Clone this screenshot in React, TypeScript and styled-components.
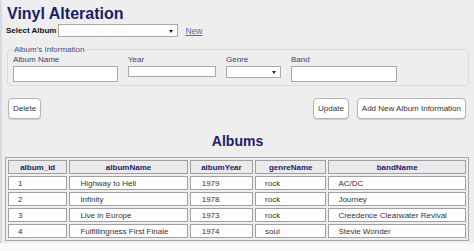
import styled, { createGlobalStyle } from "styled-components";

const GlobalStyle = createGlobalStyle`
    html, body {
        margin: 0;
        padding: 0;
        background: #f7f7fa;
        font-family: "Liberation Sans", Arial, sans-serif;
    }
`;

const Page = styled.div`
    display: flex;
    width: 474px;
    height: 251px;
    overflow: hidden;
    background: #fafafa;
`;

const Strip = styled.div`
    width: 3px;
    height: 243px;
    background: #d9d9e6;
`;

const Main = styled.div`
    flex: 1;
    height: 243px;
    background: #eeeeee;
    padding: 4px 5px 0 4px;
    box-sizing: border-box;
`;

const Title = styled.h1`
    margin: 0 0 0 1px;
    font-size: 16px;
    line-height: 19px;
    font-weight: bold;
    color: #1b1b6e;
`;

const SelectRow = styled.div`
    display: flex;
    align-items: center;
    gap: 2px;
    margin-top: 1px;
    height: 13px;
`;

const BoldLabel = styled.span`
    font-size: 8px;
    font-weight: bold;
    color: #111;
`;

const FakeSelect = styled.div<{ w: number; h: number }>`
    position: relative;
    width: ${p => p.w}px;
    height: ${p => p.h}px;
    background: #fff;
    border: 1px solid #a9a9a9;
    box-sizing: border-box;
    &::after {
        content: "";
        position: absolute;
        right: 4px;
        top: 50%;
        margin-top: -1px;
        border-left: 2px solid transparent;
        border-right: 2px solid transparent;
        border-top: 3px solid #222;
    }
`;

const NewLink = styled.a`
    margin-left: 5px;
    font-size: 8.5px;
    color: #6b5fb0;
    text-decoration: underline;
`;

const Fieldset = styled.fieldset`
    margin: 8px 0 0 1px;
    padding: 0 5px 5px 5px;
    border: 1px solid #dcdcdc;
    border-radius: 4px;
    height: 41px;
    box-sizing: border-box;
`;

const Legend = styled.legend`
    font-size: 8px;
    color: #4b4b85;
    padding: 0 1px;
    margin-left: 0;
`;

const Fields = styled.div`
    display: flex;
    gap: 10px;
    margin-top: 1px;
`;

const Field = styled.div`
    display: flex;
    flex-direction: column;
    gap: 1px;
`;

const FieldLabel = styled.span`
    font-size: 8px;
    line-height: 10px;
    color: #3c3c70;
`;

const TextBox = styled.div<{ w: number; h: number }>`
    width: ${p => p.w}px;
    height: ${p => p.h}px;
    background: #fff;
    border: 1px solid #a9a9a9;
    box-sizing: border-box;
`;

const ButtonRow = styled.div`
    display: flex;
    align-items: center;
    margin-top: 12px;
    padding-left: 2px;
    padding-right: 3px;
`;

const Spacer = styled.div`
    flex: 1;
`;

const Button = styled.button`
    height: 21px;
    padding: 0 4px;
    font-family: "Liberation Sans", Arial, sans-serif;
    font-size: 8px;
    color: #333;
    background: #fff;
    border: 1px solid #b5b5b5;
    border-radius: 4px;
    box-shadow: 0 1px 1px rgba(0, 0, 0, 0.15);
    & + & {
        margin-left: 8px;
    }
`;

const Heading = styled.h2`
    margin: 14px 0 0 0;
    text-align: center;
    font-size: 14px;
    line-height: 16px;
    font-weight: bold;
    color: #1b1b6e;
`;

const Table = styled.table`
    margin-top: 8px;
    margin-left: -1px;
    width: 464px;
    border: 1px solid #a8a8a8;
    border-spacing: 2px;
    background: #eeeeee;
    font-size: 8px;
`;

const Th = styled.th<{ w: number }>`
    width: ${p => p.w}px;
    height: 12px;
    padding: 0;
    border: 1px solid #a0a0a0;
    background: #eaeaea;
    color: #1b1b6e;
    font-weight: bold;
    text-align: center;
`;

const Td = styled.td<{ indent: number }>`
    height: 12px;
    padding: 0 0 0 ${p => p.indent}px;
    border: 1px solid #a0a0a0;
    background: #fff;
    color: #333;
`;

const albums = [
    { id: 1, name: "Highway to Hell", year: 1979, genre: "rock", band: "AC/DC" },
    { id: 2, name: "Infinity", year: 1978, genre: "rock", band: "Journey" },
    { id: 3, name: "Live in Europe", year: 1973, genre: "rock", band: "Creedence Clearwater Revival" },
    { id: 4, name: "Fulfillingness First Finale", year: 1974, genre: "soul", band: "Stevie Wonder" },
];

export default function App() {
    return (
        <Page>
            <GlobalStyle />
            <Strip />
            <Main>
                <Title>Vinyl Alteration</Title>
                <SelectRow>
                    <BoldLabel>Select Album</BoldLabel>
                    <FakeSelect w={120} h={13} />
                    <NewLink href="#">New</NewLink>
                </SelectRow>

                <Fieldset>
                    <Legend>Album's Information</Legend>
                    <Fields>
                        <Field>
                            <FieldLabel>Album Name</FieldLabel>
                            <TextBox w={105} h={16} />
                        </Field>
                        <Field>
                            <FieldLabel>Year</FieldLabel>
                            <TextBox w={88} h={11} />
                        </Field>
                        <Field>
                            <FieldLabel>Genre</FieldLabel>
                            <FakeSelect w={55} h={12} />
                        </Field>
                        <Field>
                            <FieldLabel>Band</FieldLabel>
                            <TextBox w={106} h={16} />
                        </Field>
                    </Fields>
                </Fieldset>

                <ButtonRow>
                    <Button>Delete</Button>
                    <Spacer />
                    <Button>Update</Button>
                    <Button>Add New Album Information</Button>
                </ButtonRow>

                <Heading>Albums</Heading>

                <Table>
                    <thead>
                        <tr>
                            <Th w={58}>album_id</Th>
                            <Th w={118}>albumName</Th>
                            <Th w={62}>albumYear</Th>
                            <Th w={70}>genreName</Th>
                            <Th w={138}>bandName</Th>
                        </tr>
                    </thead>
                    <tbody>
                        {albums.map(a => (
                            <tr key={a.id}>
                                <Td indent={9}>{a.id}</Td>
                                <Td indent={10}>{a.name}</Td>
                                <Td indent={11}>{a.year}</Td>
                                <Td indent={9}>{a.genre}</Td>
                                <Td indent={9}>{a.band}</Td>
                            </tr>
                        ))}
                    </tbody>
                </Table>
            </Main>
        </Page>
    );
}
